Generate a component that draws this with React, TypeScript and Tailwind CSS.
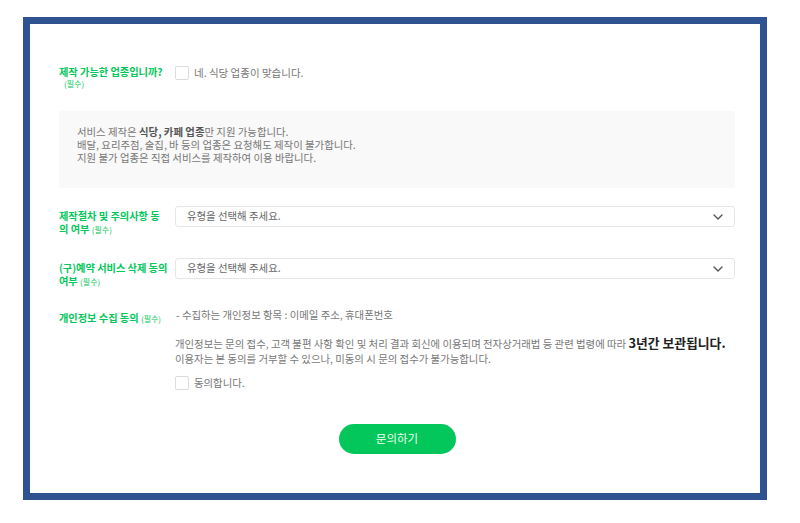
const FONT = "font-['Noto_Sans_CJK_KR','Noto_Sans',sans-serif]";

function Checkbox() {
  return <span className="block h-[14px] w-[14px] shrink-0 rounded-[2px] border border-[#dcdcdc] bg-white" />;
}

function Required() {
  return <span className="text-[8px] font-normal">(필수)</span>;
}

function Chevron() {
  return (
    <svg width="10" height="6" viewBox="0 0 10 6" fill="none" className="shrink-0">
      <path d="M1 1l4 4 4-4" stroke="#555" strokeWidth="1.4" strokeLinecap="round" strokeLinejoin="round" />
    </svg>
  );
}

function Select() {
  return (
    <div className="flex h-[21px] flex-1 items-center justify-between rounded-[3px] border border-[#e6e6e6] bg-white pl-[11px] pr-[11px]">
      <span className="text-[10.4px] leading-none text-[#666]">유형을 선택해 주세요.</span>
      <Chevron />
    </div>
  );
}

export default function App() {
  return (
    <div className={`${FONT} h-[523px] w-[800px] bg-white pl-[23px] pt-[17px]`}>
      <div className="h-[483px] w-[744px] border-[7px] border-[#2f5291] bg-white pl-[29px] pr-[25px] pt-[41px]">
        {/* 업종 확인 */}
        <div className="flex">
          <div className="w-[116px] text-[10.2px] font-bold text-[#03c75a]">
            <p className="leading-[13px]">제작 가능한 업종입니까?</p>
            <p className="pl-[5px] text-[8px] font-normal leading-[11px]">(필수)</p>
          </div>
          <label className="mt-[1px] flex h-[14px] items-center gap-[5px]">
            <Checkbox />
            <span className="text-[10.5px] text-[#777]">네. 식당 업종이 맞습니다.</span>
          </label>
        </div>

        <div className="mt-[22px] h-[77px] rounded-[3px] bg-[#f9f9f9] pl-[18px] pt-[15px] text-[10.4px] leading-[12.8px] text-[#777]">
          <p>
            서비스 제작은 <b className="text-[#555]">식당, 카페 업종</b>만 지원 가능합니다.
          </p>
          <p>배달, 요리주점, 술집, 바 등의 업종은 요청해도 제작이 불가합니다.</p>
          <p>지원 불가 업종은 직접 서비스를 제작하여 이용 바랍니다.</p>
        </div>

        <div className="mt-[18px] flex">
          <p className="mt-[4px] w-[109px] text-[10.2px] font-bold leading-[12.5px] text-[#03c75a]">
            제작절차 및 주의사항 동의 여부 <Required />
          </p>
          <div className="ml-[7px] flex flex-1">
            <Select />
          </div>
        </div>

        <div className="mt-[22px] flex">
          <p className="mt-[4px] w-[109px] text-[10.2px] font-bold leading-[12.5px] text-[#03c75a]">
            (구)예약 서비스 삭제 동의 여부 <Required />
          </p>
          <div className="ml-[7px] flex flex-1">
            <Select />
          </div>
        </div>

        {/* 개인정보 */}
        <div className="mt-[21px] flex">
          <p className="mt-[3px] w-[116px] text-[10.2px] font-bold leading-[12px] text-[#03c75a]">
            개인정보 수집 동의 <Required />
          </p>
          <div className="flex-1 text-[10.4px] text-[#777]">
            <p className="pl-[1px] leading-[12px]">- 수집하는 개인정보 항목 : 이메일 주소, 휴대폰번호</p>
            <div className="mt-[14px] leading-[15px]">
              <p>
                개인정보는 문의 접수, 고객 불편 사항 확인 및 처리 결과 회신에 이용되며 전자상거래법 등 관련 법령에 따라{" "}
                <b className="text-[12.8px] text-[#222]">3년간 보관됩니다.</b>
              </p>
              <p>이용자는 본 동의를 거부할 수 있으나, 미동의 시 문의 접수가 불가능합니다.</p>
            </div>
            <label className="mt-[10px] flex h-[14px] items-center gap-[5px]">
              <Checkbox />
              <span>동의합니다.</span>
            </label>
          </div>
        </div>

        <div className="mt-[34px] flex justify-center">
          <button className="h-[30px] w-[117px] rounded-full bg-[#03c75a] text-[11.5px] text-[#eafff1]">
            문의하기
          </button>
        </div>
      </div>
    </div>
  );
}
